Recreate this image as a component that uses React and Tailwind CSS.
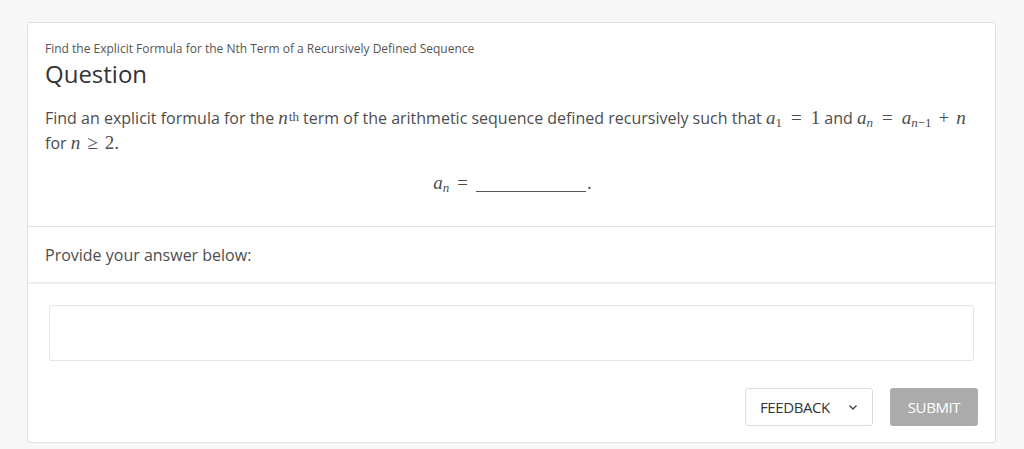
import React from "react";

export default function App() {
  const serif = "font-['Liberation_Serif','DejaVu_Serif',serif] leading-[16px]";
  const sub = "text-[13px] leading-none";
  return (
    <div className="h-[449px] w-[1024px] bg-[#f7f7f7] pt-[22px] pl-[27px] font-['Open_Sans',sans-serif] text-[#4d4d4d]">
      <div className="w-[969px] bg-white border border-[#e0e0e0] rounded-[3px]">
        <div className="px-[17px] pt-[17px] pb-[31px] border-b border-[#e0e0e0]">
          <div className="text-[12px] leading-[18px] text-[#555]">
            Find the Explicit Formula for the Nth Term of a Recursively Defined Sequence
          </div>
          <div className="text-[24px] leading-[32px] text-[#333]">Question</div>
          <div className="text-[16px] leading-[25px] mt-[16px]">
            Find an explicit formula for the{" "}
            <span className={`${serif} italic text-[19px]`}>n</span>
            <sup className={`${serif} text-[13px] leading-none relative top-[-3px] ml-[1px]`}>th</sup> term of the arithmetic sequence defined recursively such that{" "}
            <span className={`${serif} text-[19px]`}>
              <i>a</i><sub className={`${sub} not-italic`}>1</sub>
              <span className="mx-[9px]">=</span>1
            </span>{" "}
            and{" "}
            <span className={`${serif} text-[19px]`}>
              <i>a</i><sub className={`${sub} italic`}>n</sub>
              <span className="mx-[9px]">=</span>
              <i>a</i><sub className={sub}><i>n</i>−1</sub>
              <span className="mx-[7px]">+</span><i>n</i>
            </span>
            <br />
            for{" "}
            <span className={`${serif} text-[19px]`}>
              <i>n</i><span className="mx-[7px]">≥</span>2.
            </span>
          </div>
          <div className="text-center mt-[15px] h-[24px] leading-[24px] pl-[2px]">
            <span className={`${serif} text-[19px]`}>
              <i>a</i><sub className={`${sub} italic`}>n</sub>
              <span className="mx-[8px]">=</span>
              <span className="inline-block w-[110px] border-b border-[#555] align-[-3px] mr-[1px]"></span>.
            </span>
          </div>
        </div>
        <div className="px-[17px] h-[57px] flex items-center text-[16px] border-b-2 border-[#eee]">
          Provide your answer below:
        </div>
        <div className="pt-[21px] pl-[21px] pr-[17px] pb-[16px]">
          <div className="h-[56px] w-[925px] border border-[#e6e6e6] rounded-[2px]"></div>
          <div className="flex justify-end gap-[17px] mt-[27px]">
            <button className="h-[38px] w-[128px] border border-[#ddd] rounded-[3px] bg-white flex items-center pl-[14px] text-[15px] text-[#333] tracking-[-0.4px]">
              FEEDBACK
              <svg className="ml-[18px]" width="10" height="10" viewBox="0 0 10 10">
                <path d="M1.5 3.5 L5 7 L8.5 3.5" fill="none" stroke="#444" strokeWidth="1.4" />
              </svg>
            </button>
            <button className="h-[38px] w-[88px] rounded-[3px] bg-[#ababab] text-white text-[15px] tracking-[-0.4px]">
              SUBMIT
            </button>
          </div>
        </div>
      </div>
    </div>
  );
}
